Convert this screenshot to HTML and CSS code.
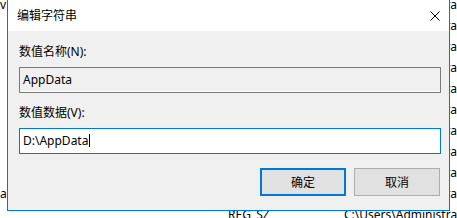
FILE: index.html
```html
<!DOCTYPE html>
<html lang="zh-CN">
<head>
<meta charset="utf-8">
<title>编辑字符串</title>
<link rel="stylesheet" href="styles.css">
</head>
<body>
<div class="desk">
  <div class="list">
    <div class="row"><span class="c-name">v</span><span class="c-type"></span><span class="c-data tail">ra</span></div>
    <div class="row"><span class="c-name"></span><span class="c-type"></span><span class="c-data tail">ra</span></div>
    <div class="row"><span class="c-name"></span><span class="c-type"></span><span class="c-data tail">ra</span></div>
    <div class="row"><span class="c-name"></span><span class="c-type"></span><span class="c-data tail">ra</span></div>
    <div class="row"><span class="c-name"></span><span class="c-type"></span><span class="c-data tail">ra</span></div>
    <div class="row"><span class="c-name"></span><span class="c-type"></span><span class="c-data tail">ra</span></div>
    <div class="row"><span class="c-name"></span><span class="c-type"></span><span class="c-data tail">ra</span></div>
    <div class="row"><span class="c-name"></span><span class="c-type"></span><span class="c-data tail">ra</span></div>
    <div class="row"><span class="c-name"></span><span class="c-type"></span><span class="c-data tail">ra</span></div>
    <div class="row"><span class="c-name">a</span><span class="c-type"></span><span class="c-data tail">ra</span></div>
    <div class="row"><span class="c-name"></span><span class="c-type">REG_SZ</span><span class="c-data">C:\Users\Administrator</span></div>
  </div>

  <div class="dialog">
    <div class="titlebar">
      <span class="title">编辑字符串</span>
      <svg class="close" width="10" height="10" viewBox="0 0 10 10" aria-hidden="true">
        <path d="M0.5 0.5 L9.5 9.5 M9.5 0.5 L0.5 9.5" stroke="#000" stroke-width="1" fill="none"/>
      </svg>
    </div>
    <div class="body">
      <div class="label">数值名称(N):</div>
      <div class="field readonly">AppData</div>
      <div class="label second">数值数据(V):</div>
      <div class="field active">D:\AppData<span class="caret"></span></div>
      <div class="buttons">
        <div class="btn default">确定</div>
        <div class="btn">取消</div>
      </div>
    </div>
  </div>
</div>
</body>
</html>
```

FILE: styles.css
```css
html, body {
  margin: 0;
  padding: 0;
  background: #ffffff;
}

body {
  font-family: "Noto Sans", "Noto Sans CJK SC", sans-serif;
  font-size: 12px;
  color: #000;
}

.desk {
  position: relative;
  width: 457px;
  height: 218px;
  overflow: hidden;
}

.list {
  margin-top: -6px;
}

.row {
  display: grid;
  grid-template-columns: 228px 116px 113px;
  height: 21px;
  line-height: 21px;
  white-space: nowrap;
  overflow: hidden;
}

.c-name, .c-type, .c-data {
  overflow: hidden;
}

.c-data.tail {
  text-align: right;
  padding-right: 0;
}

.dialog {
  position: absolute;
  left: 7px;
  top: -1px;
  width: 443px;
  height: 212px;
  box-sizing: border-box;
  border: 1px solid #0078d7;
  background: #f0f0f0;
  display: flex;
  flex-direction: column;
  font-family: "Noto Sans", "Noto Sans CJK SC", sans-serif;
}

.titlebar {
  height: 31px;
  background: #ffffff;
  display: flex;
  align-items: center;
  justify-content: space-between;
  padding: 0 9px 0 9px;
}

.title {
  font-size: 12px;
  line-height: 16px;
}

.close {
  display: block;
}

.body {
  flex: 1;
  display: flex;
  flex-direction: column;
  padding: 13px 8px 0 11px;
}

.label {
  line-height: 16px;
}

.label.second {
  margin-top: 12px;
}

.field {
  margin-top: 7px;
  height: 26px;
  box-sizing: border-box;
  padding: 0 3px;
  line-height: 24px;
  white-space: nowrap;
}

.field.readonly {
  border: 1px solid #7a7a7a;
  background: #f0f0f0;
  box-shadow: inset 0 -1px 0 #ffffff;
}

.field.active {
  border: 1px solid #0078d7;
  background: #ffffff;
}

.caret {
  display: inline-block;
  width: 1px;
  height: 13px;
  background: #000;
  vertical-align: -2px;
  margin-left: 1px;
}

.buttons {
  margin-top: 14px;
  display: flex;
  justify-content: flex-end;
  gap: 8px;
  padding-right: 1px;
}

.btn {
  width: 86px;
  height: 28px;
  box-sizing: border-box;
  border: 1px solid #adadad;
  background: #e1e1e1;
  display: flex;
  align-items: center;
  justify-content: center;
  font-size: 12px;
}

.btn.default {
  border: 2px solid #0078d7;
}
```
